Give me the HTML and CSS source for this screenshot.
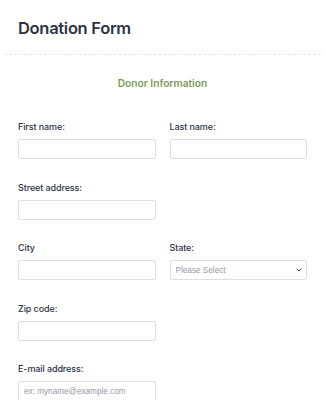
FILE: index.html
```html
<!DOCTYPE html>
<html lang="en">
<head>
<meta charset="utf-8">
<title>Donation Form</title>
<link rel="stylesheet" href="styles.css">
</head>
<body>
<div class="page">
  <header class="header">
    <h1 class="title">Donation Form</h1>
  </header>
  <section class="section">
    <h2 class="section-title">Donor Information</h2>
    <div class="grid">
      <div class="field">
        <label class="label">First name:</label>
        <input class="input" type="text">
      </div>
      <div class="field">
        <label class="label">Last name:</label>
        <input class="input" type="text">
      </div>
      <div class="field">
        <label class="label">Street address:</label>
        <input class="input" type="text">
      </div>
      <div class="field"></div>
      <div class="field">
        <label class="label">City</label>
        <input class="input" type="text">
      </div>
      <div class="field">
        <label class="label">State:</label>
        <div class="select-wrap">
          <select class="input select">
            <option>Please Select</option>
          </select>
          <svg class="chevron" width="6" height="4" viewBox="0 0 6 4"><path d="M0.7 0.7 L3 3 L5.3 0.7" fill="none" stroke="#4a5063" stroke-width="1"/></svg>
        </div>
      </div>
      <div class="field">
        <label class="label">Zip code:</label>
        <input class="input" type="text">
      </div>
      <div class="field"></div>
      <div class="field">
        <label class="label">E-mail address:</label>
        <input class="input" type="text" placeholder="ex: myname@example.com">
      </div>
    </div>
  </section>
</div>
</body>
</html>
```
FILE: styles.css
```css
* { box-sizing: border-box; }
html, body { margin: 0; padding: 0; background: #fff; }
body {
  font-family: Inter, "Noto Sans", sans-serif;
  color: #2c3345;
  overflow: hidden;
}
.page { width: 325px; }
.header {
  height: 55px;
  margin: 0 4px;
  padding: 17px 14px 0;
  border-bottom: 1px dashed #e4e6ec;
}
.title {
  margin: 0;
  font-size: 16.5px;
  line-height: 22px;
  font-weight: 600;
  color: #2c3345;
  letter-spacing: -0.3px;
}
.section {
  padding: 21px 18px 0;
}
.section-title {
  margin: 0 0 31px;
  text-align: center;
  font-size: 10.2px;
  line-height: 14px;
  font-weight: 600;
  color: #7b9b57;
}
.grid {
  display: grid;
  grid-template-columns: 1fr 1fr;
  column-gap: 14px;
}
.field {
  display: flex;
  flex-direction: column;
  height: 60.5px;
}
.label {
  display: block;
  font-size: 9px;
  line-height: 12px;
  font-weight: 500;
  letter-spacing: -0.1px;
  color: #2c3345;
  margin-bottom: 6px;
}
.input {
  display: block;
  width: 100%;
  height: 20px;
  margin: 0;
  padding: 0 5px;
  border: 1px solid #dcdfea;
  border-radius: 2px;
  background: #fff;
  font-family: "Liberation Sans", Arial, sans-serif;
  font-size: 8.2px;
  color: #2c3345;
  outline: none;
}
.input::placeholder { color: #959aa8; }
.select-wrap { position: relative; }
.select {
  appearance: none;
  -webkit-appearance: none;
  color: #959aa8;
}
.chevron {
  position: absolute;
  right: 5px;
  top: 8px;
}
```
